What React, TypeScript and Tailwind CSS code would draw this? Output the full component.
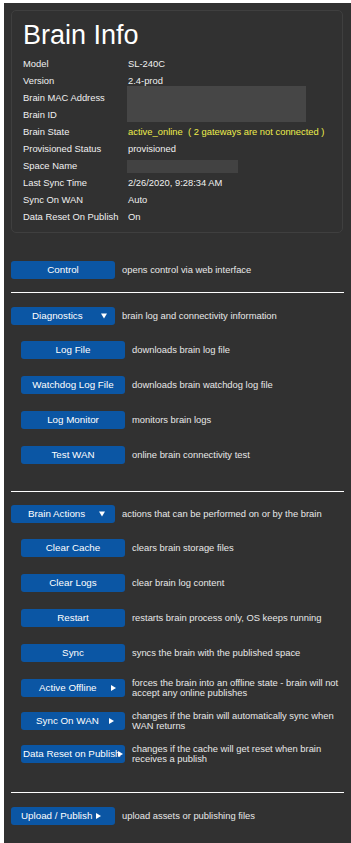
import type { ReactNode } from "react";

type Arrow = "down" | "right";

const infoRows: { label: string; value?: string; tone?: "warn" }[] = [
  { label: "Model", value: "SL-240C" },
  { label: "Version", value: "2.4-prod" },
  { label: "Brain MAC Address" },
  { label: "Brain ID" },
  { label: "Brain State", value: "active_online  ( 2 gateways are not connected )", tone: "warn" },
  { label: "Provisioned Status", value: "provisioned" },
  { label: "Space Name" },
  { label: "Last Sync Time", value: "2/26/2020, 9:28:34 AM" },
  { label: "Sync On WAN", value: "Auto" },
  { label: "Data Reset On Publish", value: "On" },
];

function ArrowIcon({ kind }: { kind: Arrow }) {
  if (kind === "down") {
    return (
      <svg width="6" height="6" viewBox="0 0 6 6" className="shrink-0">
        <path d="M0 0.5 H6 L3 5.5 Z" fill="white" />
      </svg>
    );
  }
  return (
    <svg width="5" height="6" viewBox="0 0 5 6" className="shrink-0">
      <path d="M0 0 L5 3 L0 6 Z" fill="white" />
    </svg>
  );
}

function ActionButton({
  label,
  arrow,
  pad = 0,
  gap = 0,
}: {
  label: string;
  arrow?: Arrow;
  pad?: number;
  gap?: number;
}) {
  return (
    <button
      className={`flex h-[18px] w-[104px] shrink-0 items-center rounded-[3px] bg-[#0b56a4] text-[9.8px] leading-none text-white ${
        arrow ? "justify-start" : "justify-center"
      }`}
      style={arrow ? { paddingLeft: pad } : undefined}
    >
      <span className="whitespace-nowrap">{label}</span>
      {arrow ? (
        <span className="flex items-center" style={{ marginLeft: gap }}>
          <ArrowIcon kind={arrow} />
        </span>
      ) : null}
    </button>
  );
}

// rows keep the button's height; two-line notes spill evenly above and below
function Row({
  className = "",
  children,
  desc,
}: {
  className?: string;
  children: ReactNode;
  desc: string;
}) {
  return (
    <div className={`flex h-[18px] items-center gap-[7px] ${className}`}>
      {children}
      <p className="w-[212px] shrink-0 text-[9.4px] leading-[10.5px] text-[#e8e8e8]">{desc}</p>
    </div>
  );
}

function Divider({ className = "" }: { className?: string }) {
  return <div className={`h-px w-[333px] bg-white ${className}`} />;
}

export default function App() {
  return (
    <div className="min-h-[843px] bg-white pl-[4px] pt-[3px] font-['Liberation_Sans',Arial,sans-serif]">
      <div className="min-h-[840px] bg-[#313131] px-[7px] pb-[20px] pt-[7px]">
        <section className="h-[223px] w-[332px] rounded-[5px] border border-[#3f3f3f] px-[11px] pt-[11px]">
          <h1 className="text-[27px] leading-[27px] text-white">Brain Info</h1>
          <div className="mt-[7px] grid grid-cols-[105px_1fr] auto-rows-[17px] text-[9.4px] text-[#f0f0f0]">
            {infoRows.map((row) => (
              <div key={row.label} className="contents">
                <div className="flex items-center whitespace-nowrap">{row.label}</div>
                {row.label === "Brain MAC Address" ? (
                  <div className="row-span-2">
                    <div className="-ml-px mt-[-4.5px] h-[36px] w-[179px] bg-[#464646]" />
                  </div>
                ) : row.label === "Brain ID" ? null : row.label === "Space Name" ? (
                  <div>
                    <div className="-ml-px mt-[1.5px] h-[13px] w-[111px] bg-[#424242]" />
                  </div>
                ) : (
                  <div
                    className={`flex items-center whitespace-pre ${
                      row.tone === "warn" ? "text-[#eded4c]" : ""
                    }`}
                  >
                    {row.value}
                  </div>
                )}
              </div>
            ))}
          </div>
        </section>

        <Row className="mt-[28px]" desc="opens control via web interface">
          <ActionButton label="Control" />
        </Row>

        <Divider className="mt-[13px]" />

        <Row className="mt-[14px]" desc="brain log and connectivity information">
          <ActionButton label="Diagnostics" arrow="down" pad={21} gap={18} />
        </Row>
        <div className="pl-[10px]">
          <Row className="mt-[16px]" desc="downloads brain log file">
            <ActionButton label="Log File" />
          </Row>
          <Row className="mt-[17px]" desc="downloads brain watchdog log file">
            <ActionButton label="Watchdog Log File" />
          </Row>
          <Row className="mt-[17px]" desc="monitors brain logs">
            <ActionButton label="Log Monitor" />
          </Row>
          <Row className="mt-[17px]" desc="online brain connectivity test">
            <ActionButton label="Test WAN" />
          </Row>
        </div>

        <Divider className="mt-[27px]" />

        <Row className="mt-[13px]" desc="actions that can be performed on or by the brain">
          <ActionButton label="Brain Actions" arrow="down" pad={17} gap={14} />
        </Row>
        <div className="pl-[10px]">
          <Row className="mt-[16px]" desc="clears brain storage files">
            <ActionButton label="Clear Cache" />
          </Row>
          <Row className="mt-[17px]" desc="clear brain log content">
            <ActionButton label="Clear Logs" />
          </Row>
          <Row className="mt-[17px]" desc="restarts brain process only, OS keeps running">
            <ActionButton label="Restart" />
          </Row>
          <Row className="mt-[17px]" desc="syncs the brain with the published space">
            <ActionButton label="Sync" />
          </Row>
          <Row
            className="mt-[17px]"
            desc="forces the brain into an offline state - brain will not accept any online publishes"
          >
            <ActionButton label="Active Offline" arrow="right" pad={18} gap={14} />
          </Row>
          <Row
            className="mt-[15px]"
            desc="changes if the brain will automatically sync when WAN returns"
          >
            <ActionButton label="Sync On WAN" arrow="right" pad={15} gap={10} />
          </Row>
          <Row
            className="mt-[15px]"
            desc="changes if the cache will get reset when brain receives a publish"
          >
            <ActionButton label="Data Reset on Publish" arrow="right" pad={2} gap={-2} />
          </Row>
        </div>

        <Divider className="mt-[29px]" />

        <Row className="mt-[14px]" desc="upload assets or publishing files">
          <ActionButton label="Upload / Publish" arrow="right" pad={10} gap={4} />
        </Row>
      </div>
    </div>
  );
}
